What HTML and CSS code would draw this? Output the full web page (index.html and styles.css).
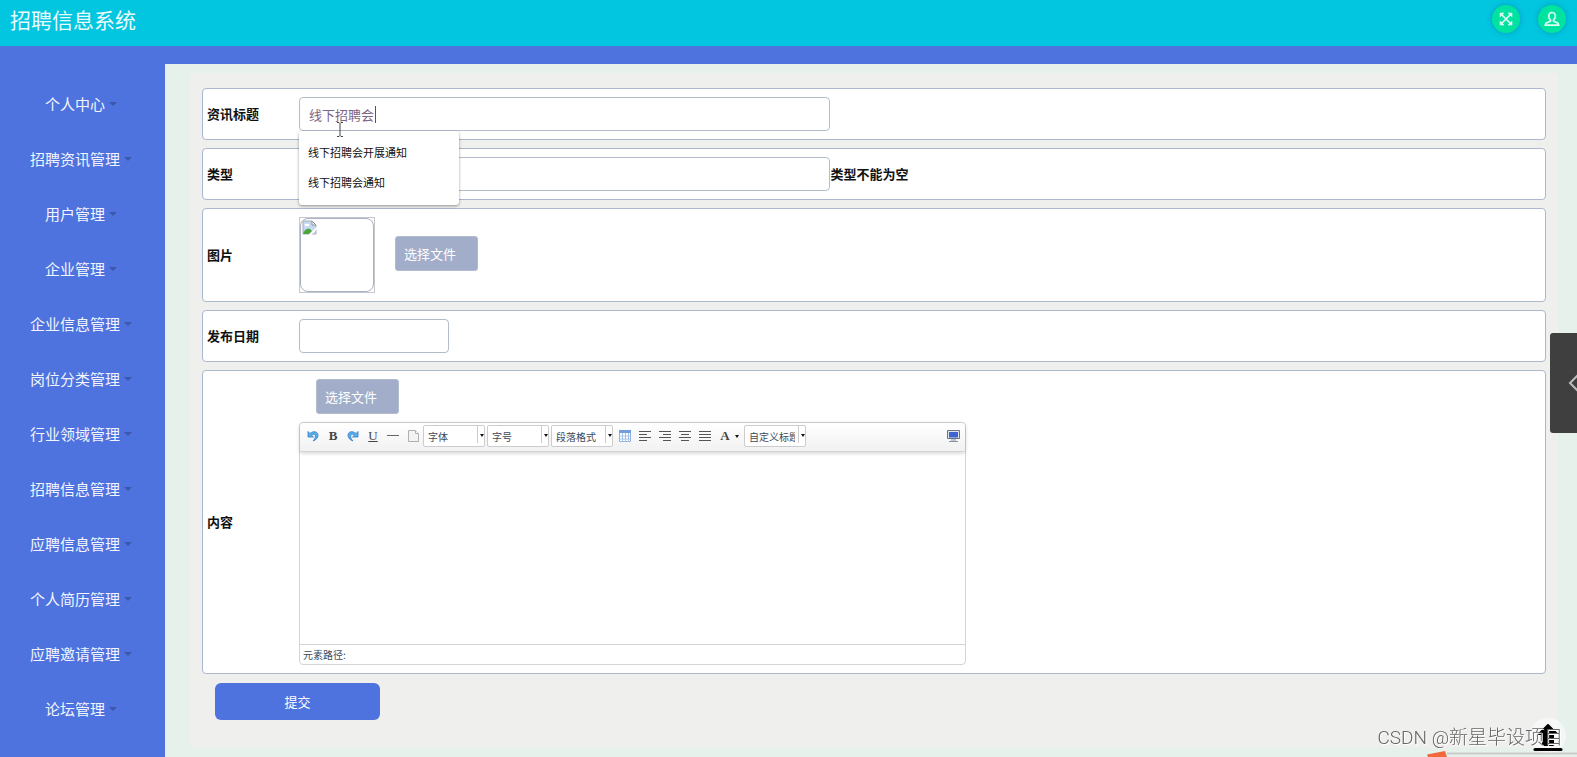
FILE: index.html
```html
<!DOCTYPE html>
<html lang="zh-CN">
<head>
    <meta charset="UTF-8">
    <meta name="viewport" content="width=device-width, initial-scale=1.0">
    <title>招聘信息系统</title>
    <link rel="stylesheet" href="styles.css">
</head>
<body>
    <!-- Header -->
    <header class="header">
        <h1 class="header-title">招聘信息系统</h1>
        <div class="header-tools">
            <button type="button" class="round-btn" aria-label="全屏">
                <svg width="14" height="14" viewBox="0 0 14 14" fill="none" stroke="#d9fff2" stroke-width="1.7">
                    <path d="M1.5 1.5l11 11M12.5 1.5l-11 11"/>
                    <path d="M1 5V1h4zM9 1h4v4zM13 9v4H9zM5 13H1V9z" fill="#d9fff2" stroke-width=".6"/>
                </svg>
            </button>
            <button type="button" class="round-btn" aria-label="用户">
                <svg width="16" height="16" viewBox="0 0 16 16" fill="none" stroke="#d9fff2" stroke-width="1.7">
                    <path d="M8 1.5c-2.100 0-3.300 1.500-3.300 3.700 0 1.700.7 3 1.800 3.700v1.300L3 11.600c-1 .5-1.500 1.200-1.700 2.600h13.400c-.2-1.400-.7-2.100-1.700-2.600l-3.500-1.400V8.900c1.100-.7 1.800-2 1.800-3.700C11.300 3 10.100 1.500 8 1.500z"/>
                </svg>
            </button>
        </div>
    </header>
    <div class="top-bar"></div>

    <div class="layout">
        <!-- Sidebar -->
        <nav class="sidebar">
            <a href="#" class="nav-item">个人中心</a>
            <a href="#" class="nav-item">招聘资讯管理</a>
            <a href="#" class="nav-item">用户管理</a>
            <a href="#" class="nav-item">企业管理</a>
            <a href="#" class="nav-item">企业信息管理</a>
            <a href="#" class="nav-item">岗位分类管理</a>
            <a href="#" class="nav-item">行业领域管理</a>
            <a href="#" class="nav-item">招聘信息管理</a>
            <a href="#" class="nav-item">应聘信息管理</a>
            <a href="#" class="nav-item">个人简历管理</a>
            <a href="#" class="nav-item">应聘邀请管理</a>
            <a href="#" class="nav-item">论坛管理</a>
        </nav>

        <!-- Form -->
        <main class="main">
            <form class="panel">
                <div class="form-row">
                    <label class="form-label" for="title">资讯标题</label>
                    <div class="input-wrap">
                        <input type="text" class="text-input" id="title" value="线下招聘会" autocomplete="off">
                        <span class="text-caret"></span>
                        <ul class="suggest">
                            <li>线下招聘会开展通知</li>
                            <li>线下招聘会通知</li>
                        </ul>
                        <svg class="mouse" width="8" height="15" viewBox="0 0 8 15" fill="none" stroke="#444">
                            <path d="M1 .5h2l1 1 1-1h2M4 1.500v12M1 14.500h2l1-1 1 1h2"/>
                        </svg>
                    </div>
                </div>

                <div class="form-row">
                    <label class="form-label" for="type">类型</label>
                    <input type="text" class="text-input" id="type">
                    <span class="error">类型不能为空</span>
                </div>

                <div class="form-row">
                    <span class="form-label">图片</span>
                    <div class="preview">
                        <div class="preview-inner">
                            <svg width="15" height="15" viewBox="0 0 15 15">
                                <path d="M1 1h9l4 4v9H1z" fill="#c5d9f3" stroke="#a8adb5"/>
                                <path d="M10 1v4h4z" fill="#fff" stroke="#8d939c"/>
                                <ellipse cx="5" cy="5" rx="2.500" ry="1.300" fill="#fff"/>
                                <path d="M1 14c1-4 4-6 7-5l2 2-3 3z" fill="#4da63a"/>
                                <path d="M6.500 15L15 6.500V9l-5.500 6z" fill="#fff"/>
                            </svg>
                        </div>
                    </div>
                    <button type="button" class="file-btn image-btn">选择文件</button>
                </div>

                <div class="form-row">
                    <label class="form-label" for="date">发布日期</label>
                    <input type="text" class="text-input date-input" id="date">
                </div>

                <div class="form-row">
                    <label class="form-label" for="content">内容</label>
                    <div class="content-col">
                        <button type="button" class="file-btn content-btn">选择文件</button>
                        <div class="editor">
                            <div class="toolbar">
                                <button type="button" class="tool" aria-label="撤销">
                                    <svg width="12" height="12" viewBox="0 0 12 12"><path d="M1 1.500v5.500h5.500L4.600 5.200C6.500 3.600 8.500 4.200 8.300 6.500 8.200 8.300 7.300 9.600 6 11c3-1 5.200-3.200 5-6C10.800 1.500 6.500.5 3 3.500z" fill="#5aaeea" stroke="#2f7fc8" stroke-width=".8"/></svg>
                                </button>
                                <button type="button" class="tool letter" aria-label="加粗"><b>B</b></button>
                                <button type="button" class="tool" aria-label="重做">
                                    <svg width="12" height="12" viewBox="0 0 12 12"><path d="M11 1.500v5.500H5.500l1.900-1.800C5.500 3.600 3.500 4.200 3.700 6.500 3.800 8.300 4.700 9.600 6 11 3 10 .8 7.800 1 5 1.200 1.500 5.500.5 9 3.500z" fill="#5aaeea" stroke="#2f7fc8" stroke-width=".8"/></svg>
                                </button>
                                <button type="button" class="tool letter" aria-label="下划线"><u>U</u></button>
                                <button type="button" class="tool" aria-label="分隔线">
                                    <svg width="12" height="12" viewBox="0 0 12 12"><path d="M0 5.500h12" stroke="#666"/></svg>
                                </button>
                                <button type="button" class="tool" aria-label="清空文档">
                                    <svg width="11" height="12" viewBox="0 0 11 12"><path d="M.5.500h7l3 3v8H.5z" fill="#f3f3f3" stroke="#b0b0b0"/><path d="M7.500.5v3h3" fill="#fff" stroke="#b0b0b0"/></svg>
                                </button>
                                <span class="combo"><select aria-label="字体"><option>字体</option></select></span>
                                <span class="combo"><select aria-label="字号"><option>字号</option></select></span>
                                <span class="combo"><select aria-label="段落格式"><option>段落格式</option></select></span>
                                <button type="button" class="tool" aria-label="表格">
                                    <svg width="12" height="12" viewBox="0 0 12 12"><path d="M.5.5h11v11H.5z" fill="#fff" stroke="#8cb0dc"/><path d="M0 0h12v3H0z" fill="#6f9fdd"/><path d="M0 6h12M0 9h12M3.500 3v9M6.500 3v9M9.500 3v9" stroke="#a5c4ea"/></svg>
                                </button>
                                <button type="button" class="tool" aria-label="左对齐">
                                    <svg width="12" height="10" viewBox="0 0 12 10" stroke="#555"><path d="M0 .5h12M0 3.500h8M0 6.500h12M0 9.500h8"/></svg>
                                </button>
                                <button type="button" class="tool" aria-label="右对齐">
                                    <svg width="12" height="10" viewBox="0 0 12 10" stroke="#555"><path d="M0 .5h12M4 3.500h8M0 6.500h12M4 9.500h8"/></svg>
                                </button>
                                <button type="button" class="tool" aria-label="居中">
                                    <svg width="12" height="10" viewBox="0 0 12 10" stroke="#555"><path d="M0 .5h12M2 3.500h8M0 6.500h12M2 9.500h8"/></svg>
                                </button>
                                <button type="button" class="tool" aria-label="两端对齐">
                                    <svg width="12" height="10" viewBox="0 0 12 10" stroke="#555"><path d="M0 .5h12M0 3.500h12M0 6.500h12M0 9.500h12"/></svg>
                                </button>
                                <button type="button" class="tool letter color-tool" aria-label="字体颜色"><b>A</b><span class="arrow"></span></button>
                                <span class="combo"><select aria-label="自定义标题"><option>自定义标题</option></select></span>
                                <button type="button" class="tool fullscreen" aria-label="编辑器全屏">
                                    <svg width="13" height="12" viewBox="0 0 13 12"><path d="M.5.5h12v8H.5z" fill="#dfe3ea" stroke="#66738c"/><path d="M2 2h9v5.500H2z" fill="#3f63d0"/><path d="M4 10h5M2 11.500h9" stroke="#8791a5"/></svg>
                                </button>
                            </div>
                            <textarea class="editor-body" id="content"></textarea>
                            <div class="path">元素路径:</div>
                        </div>
                    </div>
                </div>

                <button type="submit" class="submit-btn">提交</button>
            </form>
        </main>
    </div>

    <!-- Floating items -->
    <button type="button" class="side-tab" aria-label="展开">
        <svg width="9" height="18" viewBox="0 0 9 18" fill="none" stroke="#bbb" stroke-width="2"><path d="M10 1L2 9l8 8"/></svg>
    </button>
    <a href="#" class="back-top" aria-label="返回顶部">
        <svg width="30" height="28" viewBox="0 0 30 28"><path d="M15 1l9 9h-4v11H10V10H6z" stroke="#000" stroke-width="2" stroke-linejoin="round"/><path d="M2 25.500h26" stroke="#000" stroke-width="3" stroke-linecap="round"/></svg>
    </a>
    <div class="watermark">CSDN @新星毕设项目</div>
    <svg class="corner" width="150" height="6" viewBox="0 0 150 6"><path d="M20 2.500h130" stroke="#ccc" stroke-width="2"/><path d="M0 3.500L18 0l2 6H1z" fill="#f0683c"/></svg>
</body>
</html>
```
FILE: styles.css
```css
* {
    box-sizing: border-box;
}

body {
    margin: 0;
    min-height: 100vh;
    display: flex;
    flex-direction: column;
    font-family: "Noto Sans CJK SC", sans-serif;
    font-size: 13px;
    line-height: 20px;
    color: #111;
    background-color: #e6f1ec;
    overflow: hidden;
}

button,
input,
select,
textarea {
    font-family: inherit;
    margin: 0;
}

button {
    border: none;
    cursor: pointer;
}

/* Header */
.header {
    height: 46px;
    display: flex;
    justify-content: space-between;
    padding: 5px 11px 0 10px;
    background-color: #02c5df;
}

.header-title {
    margin: 0;
    font-size: 21px;
    line-height: 28px;
    font-weight: normal;
    color: #e8fbfd;
}

.header-tools {
    display: flex;
    gap: 18px;
}

.round-btn {
    display: flex;
    align-items: center;
    justify-content: center;
    width: 28px;
    height: 28px;
    padding: 0;
    border-radius: 50%;
    background-color: #00e2a0;
    box-shadow: 0 0 5px rgba(0, 80, 120, 0.35);
}

.top-bar {
    height: 18px;
    background-color: #4e73df;
}

.layout {
    display: flex;
    flex: 1;
}

/* Sidebar */
.sidebar {
    width: 165px;
    flex-shrink: 0;
    padding: 12px 3px 0 0;
    background-color: #4e73df;
}

.nav-item {
    display: flex;
    align-items: center;
    justify-content: center;
    gap: 4px;
    height: 55px;
    font-size: 15px;
    color: #f2f5fd;
    text-decoration: none;
}

.nav-item::after {
    content: "";
    border: 4px solid transparent;
    border-top-color: #3b58ae;
    border-bottom: none;
}

/* Form */
.main {
    flex: 1;
    padding: 9px 19px 8px 25px;
}

.panel {
    display: flex;
    flex-direction: column;
    gap: 8px;
    padding: 15px 12px 28px;
    background-color: #efefee;
    border-radius: 4px;
}

.form-row {
    display: flex;
    align-items: center;
    padding: 8px 4px;
    background-color: #fff;
    border: 1px solid #abb7cc;
    border-radius: 4px;
}

.form-label {
    width: 92px;
    flex-shrink: 0;
    font-weight: bold;
}

.input-wrap {
    position: relative;
    display: flex;
    width: calc(40% - 3px);
}

.text-input {
    width: calc(40% - 3px);
    height: 34px;
    padding: 0 9px;
    border: 1px solid #b4bccb;
    border-radius: 4px;
    font-size: 13px;
    color: #7d6584;
    background-color: #fff;
}

.input-wrap .text-input {
    width: 100%;
}

.text-input.date-input {
    width: 150px;
}

.text-caret {
    position: absolute;
    left: 76px;
    top: 9px;
    width: 1px;
    height: 17px;
    background-color: #555;
}

.mouse {
    position: absolute;
    left: 37px;
    top: 25px;
    z-index: 3;
}

.suggest {
    position: absolute;
    left: 0;
    top: 34px;
    z-index: 2;
    width: 160px;
    margin: 0;
    padding: 6px 0 8px;
    list-style: none;
    font-size: 11px;
    line-height: 30px;
    background-color: #fff;
    border-radius: 3px;
    box-shadow: 0 1px 3px rgba(0, 0, 0, 0.4);
}

.suggest li {
    padding-left: 9px;
}

.error {
    font-weight: bold;
    margin-left: 1px;
}

.preview {
    width: 76px;
    height: 76px;
    border: 1px solid #c8c8cc;
}

.preview-inner {
    height: 74px;
    padding: 1px;
    border: 1px solid #a9b1c4;
    border-radius: 8px;
}

.preview-inner svg {
    display: block;
}

.file-btn {
    width: 83px;
    height: 35px;
    padding: 0 8px;
    border: 1px solid #b3bbcf;
    border-radius: 3px;
    font-size: 13px;
    text-align: left;
    color: #fff;
    background-color: #a2aec9;
}

.image-btn {
    margin: 0 0 4px 20px;
}

.content-btn {
    margin-left: 17px;
}

.content-col {
    display: flex;
    flex-direction: column;
    align-items: flex-start;
    gap: 8px;
    width: 50%;
}

/* Rich text editor */
.editor {
    width: 100%;
    border: 1px solid #d4d4d4;
    border-radius: 4px;
    font-size: 10px;
    color: #3c4858;
}

.toolbar {
    position: relative;
    display: flex;
    align-items: center;
    height: 29px;
    padding: 0 2px 2px 3px;
    border-bottom: 1px solid #d4d4d4;
    border-radius: 4px 4px 0 0;
    background: linear-gradient(#fff, #f1f1f3);
    box-shadow: 0 1px 4px rgba(0, 0, 0, 0.2);
}

.tool {
    display: flex;
    align-items: center;
    justify-content: center;
    width: 20px;
    height: 20px;
    flex-shrink: 0;
    padding: 0;
    background: none;
}

.letter {
    font-family: "Liberation Serif", serif;
    font-size: 13px;
    color: #444;
}

.color-tool {
    width: 29px;
    gap: 5px;
}

.arrow,
.combo::after {
    content: "";
    border: 2px solid transparent;
    border-top: 3px solid #111;
    border-bottom: none;
}

.combo {
    position: relative;
    width: 62px;
    flex-shrink: 0;
    margin-right: 2px;
}

.combo::after {
    position: absolute;
    right: 1px;
    top: 9px;
}

.combo::before {
    content: "";
    position: absolute;
    right: 7px;
    top: 1px;
    width: 1px;
    height: 17px;
    background-color: #ccc;
}

.combo select {
    display: block;
    width: 100%;
    height: 22px;
    padding: 0 10px 0 4px;
    border: 1px solid #ccc;
    border-radius: 2px;
    appearance: none;
    font-size: 10px;
    color: #3c4858;
    background-color: #fff;
}

.fullscreen {
    margin-left: auto;
}

.editor-body {
    display: block;
    width: 100%;
    height: 192px;
    padding: 8px;
    border: none;
    resize: none;
    background-color: #fff;
}

.path {
    height: 20px;
    padding-left: 3px;
    border-top: 1px solid #d4d4d4;
}

.submit-btn {
    align-self: flex-start;
    width: 165px;
    height: 37px;
    margin: 1px 0 0 13px;
    border-radius: 6px;
    font-size: 13px;
    color: #fff;
    background-color: #4e73df;
}

/* Floating items */
.side-tab {
    position: fixed;
    right: 0;
    top: 333px;
    display: flex;
    align-items: center;
    justify-content: flex-end;
    width: 27px;
    height: 100px;
    padding: 0;
    border-radius: 3px 0 0 3px;
    background-color: #3f3f3f;
}

.back-top {
    position: fixed;
    right: 11px;
    bottom: 3px;
    display: flex;
    align-items: flex-end;
    justify-content: center;
    width: 36px;
    height: 36px;
    padding-bottom: 2px;
    border-radius: 50%;
    background-color: rgba(255, 255, 255, 0.5);
}

.watermark {
    position: fixed;
    right: 14px;
    bottom: 5px;
    font-family: Roboto, "Noto Sans CJK SC", sans-serif;
    font-size: 19px;
    line-height: 28px;
    font-weight: 300;
    color: #666;
    text-shadow: 1px 1px 0 #fff;
}

.corner {
    position: fixed;
    right: 0;
    bottom: 0;
}
```
